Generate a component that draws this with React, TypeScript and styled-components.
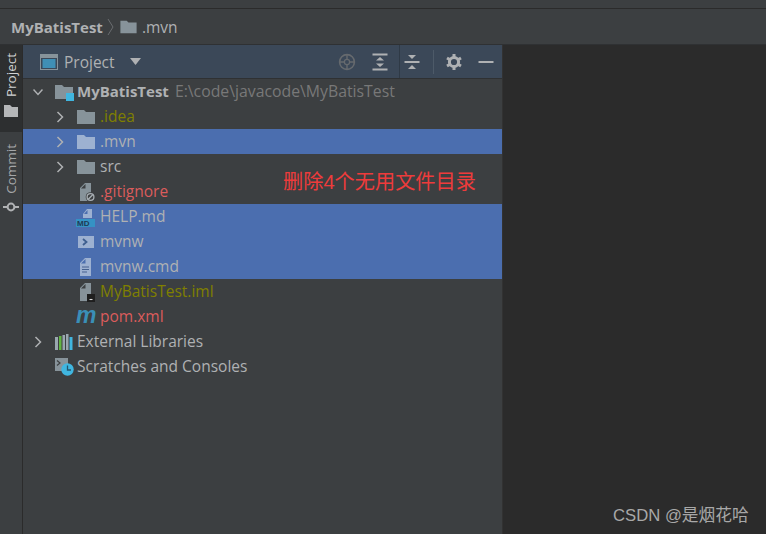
import React from 'react'
import styled, { createGlobalStyle } from 'styled-components'

const GlobalStyle = createGlobalStyle`
  html, body {
    margin: 0;
    padding: 0;
    background: #3c3f41;
    overflow: hidden;
  }
`

const Page = styled.div`
  position: relative;
  width: 766px;
  height: 534px;
  display: flex;
  flex-direction: column;
  background: #3c3f41;
  color: #afb1b3;
  font-family: 'Open Sans', 'Noto Sans', 'Noto Sans CJK SC', sans-serif;
  overflow: hidden;
`

const TopStrip = styled.div`
  height: 8px;
  flex: none;
  background: #3c3f41;
  border-bottom: 1px solid #2b2b2b;
`

const Breadcrumb = styled.div`
  height: 35px;
  flex: none;
  display: flex;
  align-items: center;
  padding-left: 11px;
  background: #3c3f41;
  border-bottom: 1px solid #2f3133;
  font-size: 15.5px;
  color: #afb1b3;
`

const CrumbRoot = styled.span`
  font-size: 15px;
  font-weight: 700;
`

const CrumbSep = styled.svg`
  width: 7px;
  height: 18px;
  margin: 0 5px 0 4px;
`

const CrumbName = styled.span`
  margin-left: 4px;
`

const Body = styled.div`
  flex: 1;
  display: flex;
  min-height: 0;
`

const SideBar = styled.div`
  width: 22px;
  flex: none;
  display: flex;
  flex-direction: column;
  background: #3c3f41;
  border-right: 1px solid #2b2b2b;
`

const SideTab = styled.div<{ $active?: boolean; $height: number }>`
  height: ${p => p.$height}px;
  display: flex;
  flex-direction: column;
  align-items: center;
  justify-content: flex-end;
  gap: 8px;
  box-sizing: border-box;
  padding-bottom: ${p => (p.$active ? 15 : 0)}px;
  background: ${p => (p.$active ? '#2d2f30' : 'transparent')};
  color: ${p => (p.$active ? '#d0d2d3' : '#a4a6a8')};
`

const SideLabel = styled.span`
  writing-mode: vertical-rl;
  transform: rotate(180deg);
  font-size: 13.5px;
  line-height: 14px;
`

const Panel = styled.div`
  width: 479px;
  flex: none;
  display: flex;
  flex-direction: column;
  background: #3c3f41;
  border-right: 1px solid #323232;
`

const PanelHeader = styled.div`
  height: 33px;
  flex: none;
  display: flex;
  align-items: center;
  padding-left: 17px;
  background: #3b4858;
  border-bottom: 1px solid #2f3133;
  font-size: 15.5px;
  color: #afb1b3;
`

const HeaderTitle = styled.span`
  margin-left: 6px;
`

const DropArrow = styled.svg`
  width: 11px;
  height: 7px;
  margin-left: 15px;
`

const HeaderTools = styled.div`
  align-self: stretch;
  margin-left: auto;
  display: flex;
  align-items: center;
  padding-right: 7px;
`

const ToolIcon = styled.svg<{ $gap: number }>`
  width: 18px;
  height: 18px;
  margin-left: ${p => p.$gap}px;
  display: block;
`

const ToolSeam = styled.div`
  width: 1px;
  align-self: stretch;
  margin-left: 10px;
  background: #2f3a46;
`

const ToolDivider = styled.div`
  width: 1px;
  height: 24px;
  margin-left: 12px;
  background: #4d5a68;
`

const Tree = styled.div`
  display: flex;
  flex-direction: column;
`

const Row = styled.div<{ $selected?: boolean; $depth: number }>`
  height: 25px;
  display: flex;
  align-items: center;
  box-sizing: border-box;
  padding-left: ${p => 10 + p.$depth * 22}px;
  background: ${p => (p.$selected ? '#4b6eaf' : 'transparent')};
  font-size: 15.5px;
  white-space: nowrap;
`

const Arrow = styled.svg`
  width: 10px;
  height: 12px;
  flex: none;
  margin-right: 12px;
`

const ArrowGap = styled.div`
  width: 22px;
  flex: none;
`

const IconBox = styled.svg`
  width: 20px;
  height: 20px;
  flex: none;
  margin-right: 4px;
  margin-left: -1px;
`

const Label = styled.span<{ $tone?: string; $bold?: boolean; $root?: boolean }>`
  margin-bottom: 2px;
  margin-left: ${p => (p.$root ? -1 : 0)}px;
  color: ${p => p.$tone || '#afb1b3'};
  font-size: ${p => (p.$bold ? '15px' : 'inherit')};
  font-weight: ${p => (p.$bold ? 700 : 400)};
`

const Hint = styled.span`
  margin-bottom: 2px;
  margin-left: 6px;
  font-size: 15.8px;
  color: #787878;
`

const Editor = styled.div`
  flex: 1;
  background: #2b2b2b;
`

const Note = styled.div`
  position: absolute;
  left: 283px;
  top: 171px;
  font-family: 'Liberation Sans', 'Noto Sans CJK SC', sans-serif;
  font-size: 20.2px;
  line-height: 22px;
  color: #ee3b3b;
`

const Watermark = styled.div`
  position: absolute;
  left: 613px;
  top: 506px;
  font-family: 'Liberation Sans', 'Noto Sans CJK SC', sans-serif;
  font-size: 16.7px;
  line-height: 20px;
  color: #a8a8a8;
`

const MavenIcon = styled.span`
  width: 20px;
  flex: none;
  margin-right: 4px;
  margin-left: -1px;
  font-family: 'Liberation Sans', sans-serif;
  font-style: italic;
  font-weight: 700;
  font-size: 23px;
  line-height: 20px;
  margin-bottom: 3px;
  color: #3a8fb7;
  text-align: center;
`

const CrumbFolder = styled.svg`
  width: 19px;
  height: 18px;
`

const Chevron = ({ open }: { open?: boolean }) => (
  <Arrow viewBox="0 0 10 12">
    <path
      d={open ? 'M0.5 3.5 L5 8.5 L9.5 3.5' : 'M2.5 1 L7.5 6 L2.5 11'}
      fill="none"
      stroke="#afb1b3"
      strokeWidth="1.5"
    />
  </Arrow>
)

const FolderShape = ({ color }: { color: string }) => (
  <path d="M1 3 H8 L10 5 H19 V17 H1 Z" fill={color} />
)

const FolderIcon = ({ color = '#87939a' }: { color?: string }) => (
  <IconBox viewBox="0 0 20 20">
    <FolderShape color={color} />
  </IconBox>
)

const FileShape = ({ color = '#87939a' }: { color?: string }) => (
  <path d="M4 6 L9 1 H15 V19 H4 Z M9.5 2 V6.5 H5 Z" fill={color} fillRule="evenodd" />
)

const GitignoreIcon = () => (
  <IconBox viewBox="0 0 20 20">
    <FileShape />
    <circle cx="14.5" cy="15" r="4.8" fill="#3c3f41" />
    <circle cx="14.5" cy="15" r="3.4" fill="none" stroke="#a9b0b5" strokeWidth="1.3" />
    <path d="M12.3 17.2 L16.7 12.8" stroke="#a9b0b5" strokeWidth="1.3" />
  </IconBox>
)

const MdIcon = () => (
  <IconBox viewBox="0 0 20 20">
    <path d="M7 7 L11 2 H16 V11 H7 Z M11.5 3 V7 H8 Z" fill="#9db1d1" fillRule="evenodd" />
    <rect x="0" y="12" width="19" height="8" fill="#3592c4" />
    <text x="1" y="18.8" fontSize="8" fontWeight="700" fontFamily="Liberation Sans" fill="#1f3a55">
      MD
    </text>
  </IconBox>
)

const ShellIcon = () => (
  <IconBox viewBox="0 0 20 20">
    <rect x="2" y="4" width="16" height="12" fill="#9db1d1" />
    <path d="M7 7 L10.5 10 L7 13" fill="none" stroke="#3f5f8f" strokeWidth="1.8" />
  </IconBox>
)

const TextFileIcon = () => (
  <IconBox viewBox="0 0 20 20">
    <FileShape color="#9db1d1" />
    <path d="M6 10 H13 M6 12.5 H13 M6 15 H11" stroke="#46618f" strokeWidth="1.1" />
  </IconBox>
)

const ImlIcon = () => (
  <IconBox viewBox="0 0 20 20">
    <FileShape />
    <rect x="11" y="12" width="8" height="8" fill="#1f1f1f" />
    <path d="M13.5 17.5 H16.5" stroke="#d8d8d8" strokeWidth="1.1" />
  </IconBox>
)

const LibrariesIcon = () => (
  <IconBox viewBox="0 0 20 20">
    <rect x="1" y="5" width="3" height="13" fill="#9aa7b0" />
    <rect x="5" y="4" width="2.5" height="14" fill="#62b543" />
    <rect x="8.5" y="3" width="2.5" height="15" fill="#9aa7b0" />
    <rect x="12" y="2" width="2.5" height="16" fill="#9aa7b0" />
    <rect x="15.5" y="5" width="3" height="13" fill="#40b6e0" />
  </IconBox>
)

const ScratchIcon = () => (
  <IconBox viewBox="0 0 20 20">
    <rect x="1" y="1" width="13" height="13" fill="#87939a" />
    <path d="M3 3.5 L6 6 L3 8.5" fill="none" stroke="#3c3f41" strokeWidth="1.2" />
    <circle cx="13.5" cy="12.5" r="6.2" fill="#40b6e0" />
    <path d="M13.5 8.5 V13 H17" fill="none" stroke="#23566e" strokeWidth="1.3" />
  </IconBox>
)

const ProjectFolderIcon = () => (
  <IconBox viewBox="0 0 20 20">
    <FolderShape color="#87939a" />
    <rect x="12" y="11" width="8" height="8" fill="#40b6e0" />
  </IconBox>
)

const App = () => {
  return (
    <Page>
      <GlobalStyle />
      <TopStrip />
      <Breadcrumb>
        <CrumbRoot>MyBatisTest</CrumbRoot>
        <CrumbSep viewBox="0 0 7 18">
          <path d="M1 1 L6 9 L1 17" fill="none" stroke="#6a6d70" strokeWidth="1" />
        </CrumbSep>
        <CrumbFolder viewBox="0 0 20 20">
          <FolderShape color="#87939a" />
        </CrumbFolder>
        <CrumbName>.mvn</CrumbName>
      </Breadcrumb>
      <Body>
        <SideBar>
          <SideTab $active $height={87}>
            <SideLabel>Project</SideLabel>
            <svg width="14" height="12" viewBox="0 0 14 12">
              <path d="M0 0 H6 L8 2 H14 V12 H0 Z" fill="#b5b7b9" />
            </svg>
          </SideTab>
          <SideTab $height={80}>
            <SideLabel>Commit</SideLabel>
            <svg width="16" height="10" viewBox="0 0 16 10">
              <path d="M0 5 H16" stroke="#b0b2b4" strokeWidth="2" />
              <circle cx="8" cy="5" r="3.4" fill="#3c3f41" stroke="#b0b2b4" strokeWidth="2" />
            </svg>
          </SideTab>
        </SideBar>
        <Panel>
          <PanelHeader>
            <svg width="18" height="16" viewBox="0 0 18 16">
              <rect x="0.5" y="0.5" width="17" height="15" fill="none" stroke="#87939a" />
              <rect x="1" y="1" width="16" height="3" fill="#87939a" />
              <rect x="2.5" y="5" width="13" height="9" fill="#3f8fb5" />
            </svg>
            <HeaderTitle>Project</HeaderTitle>
            <DropArrow viewBox="0 0 11 7">
              <path d="M0 0 H11 L5.5 7 Z" fill="#afb1b3" />
            </DropArrow>
            <HeaderTools>
              <ToolIcon $gap={0} viewBox="0 0 18 18">
                <circle cx="9" cy="9" r="7.4" fill="none" stroke="#666a6e" strokeWidth="1.6" />
                <circle cx="9" cy="9" r="2.6" fill="none" stroke="#666a6e" strokeWidth="1.2" />
                <path d="M9 1 V6 M9 12 V17 M1 9 H6 M12 9 H17" stroke="#666a6e" strokeWidth="1.4" />
              </ToolIcon>
              <ToolIcon $gap={15} viewBox="0 0 18 18">
                <path d="M1.5 1.5 H16.5 M1.5 16.5 H16.5" stroke="#afb1b3" strokeWidth="2" />
                <path d="M9 4 L13 7.5 H5 Z M9 14 L13 10.5 H5 Z" fill="#afb1b3" />
              </ToolIcon>
              <ToolSeam />
              <ToolIcon $gap={3} viewBox="0 0 18 18">
                <path d="M1.5 9 H16.5" stroke="#afb1b3" strokeWidth="2" />
                <path d="M5 2 H13 L9 6 Z M9 12 L13 16 H5 Z" fill="#afb1b3" />
              </ToolIcon>
              <ToolDivider />
              <ToolIcon $gap={11} viewBox="0 0 18 18">
                <circle cx="9" cy="9" r="4.6" fill="none" stroke="#afb1b3" strokeWidth="3" />
                <path
                  d="M9 1 V4 M9 14 V17 M2 5 L4.6 6.5 M13.4 11.5 L16 13 M2 13 L4.6 11.5 M13.4 6.5 L16 5"
                  stroke="#afb1b3"
                  strokeWidth="3"
                />
              </ToolIcon>
              <ToolIcon $gap={14} viewBox="0 0 18 18">
                <path d="M1.5 9 H16.5" stroke="#afb1b3" strokeWidth="2" />
              </ToolIcon>
            </HeaderTools>
          </PanelHeader>
          <Tree>
            <Row $depth={0}>
              <Chevron open />
              <ProjectFolderIcon />
              <Label $bold $root>MyBatisTest</Label>
              <Hint>E:\code\javacode\MyBatisTest</Hint>
            </Row>
            <Row $depth={1}>
              <Chevron />
              <FolderIcon />
              <Label $tone="#808000">.idea</Label>
            </Row>
            <Row $depth={1} $selected>
              <Chevron />
              <FolderIcon color="#9db1d1" />
              <Label>.mvn</Label>
            </Row>
            <Row $depth={1}>
              <Chevron />
              <FolderIcon />
              <Label>src</Label>
            </Row>
            <Row $depth={1}>
              <ArrowGap />
              <GitignoreIcon />
              <Label $tone="#db5c5c">.gitignore</Label>
            </Row>
            <Row $depth={1} $selected>
              <ArrowGap />
              <MdIcon />
              <Label>HELP.md</Label>
            </Row>
            <Row $depth={1} $selected>
              <ArrowGap />
              <ShellIcon />
              <Label>mvnw</Label>
            </Row>
            <Row $depth={1} $selected>
              <ArrowGap />
              <TextFileIcon />
              <Label>mvnw.cmd</Label>
            </Row>
            <Row $depth={1}>
              <ArrowGap />
              <ImlIcon />
              <Label $tone="#808000">MyBatisTest.iml</Label>
            </Row>
            <Row $depth={1}>
              <ArrowGap />
              <MavenIcon>m</MavenIcon>
              <Label $tone="#db5c5c">pom.xml</Label>
            </Row>
            <Row $depth={0}>
              <Chevron />
              <LibrariesIcon />
              <Label $root>External Libraries</Label>
            </Row>
            <Row $depth={0}>
              <ArrowGap />
              <ScratchIcon />
              <Label $root>Scratches and Consoles</Label>
            </Row>
          </Tree>
        </Panel>
        <Editor />
      </Body>
      <Note>删除4个无用文件目录</Note>
      <Watermark>CSDN @是烟花哈</Watermark>
    </Page>
  )
}

export default App
